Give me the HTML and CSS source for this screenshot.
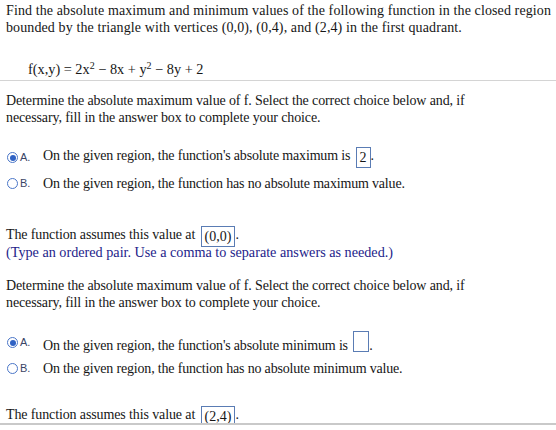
FILE: index.html
```html
<!DOCTYPE html>
<html>
<head>
<meta charset="utf-8">
<link rel="stylesheet" href="styles.css">
</head>
<body>
<div class="frame">
  <p class="intro">Find the absolute maximum and minimum values of the following function in the closed region bounded by the triangle with vertices (0,0), (0,4), and (2,4) in the first quadrant.</p>
  <p class="formula">f(x,y) = 2x<sup>2</sup> − 8x + y<sup>2</sup> − 8y + 2</p>
  <div class="rule"></div>

  <p class="ask">Determine the absolute maximum value of f. Select the correct choice below and, if necessary, fill in the answer box to complete your choice.</p>
  <div class="choice first">
    <span class="radio on"></span><span class="letter">A.</span>
    <span class="ctext">On the given region, the function's absolute maximum is <span class="box">2</span>.</span>
  </div>
  <div class="choice second">
    <span class="radio"></span><span class="letter">B.</span>
    <span class="ctext">On the given region, the function has no absolute maximum value.</span>
  </div>
  <div class="line at">The function assumes this value at <span class="box wide">(0,0)</span>.</div>
  <div class="line hint">(Type an ordered pair. Use a comma to separate answers as needed.)</div>

  <p class="ask second-ask">Determine the absolute maximum value of f. Select the correct choice below and, if necessary, fill in the answer box to complete your choice.</p>
  <div class="choice first2">
    <span class="radio on"></span><span class="letter">A.</span>
    <span class="ctext">On the given region, the function's absolute minimum is <span class="box empty"></span>.</span>
  </div>
  <div class="choice second2">
    <span class="radio"></span><span class="letter">B.</span>
    <span class="ctext">On the given region, the function has no absolute minimum value.</span>
  </div>
  <div class="line at2">The function assumes this value at <span class="box wide">(2,4)</span>.</div>
</div>
</body>
</html>
```
FILE: styles.css
```css
html, body {
  margin: 0;
  padding: 0;
  background: #fff;
}
body {
  font-family: "Liberation Serif", "Times New Roman", serif;
  font-size: 14px;
  line-height: 17px;
  color: #161616;
}
.frame {
  height: 425px;
  overflow: hidden;
  border-bottom: 2px solid #c9c9c9;
  padding: 2px 6px 0 6px;
  box-sizing: border-box;
}
p {
  margin: 0;
}
.intro {
  letter-spacing: 0.11px;
  margin-right: -12px;
}
.formula {
  margin-top: 25px;
  padding-left: 22px;
  font-size: 14.3px;
}
.formula sup {
  font-size: 10px;
  line-height: 0;
  vertical-align: 5px;
}
.rule {
  margin: 2px -6px 0 -6px;
  height: 1px;
  background: #d4d4d4;
}
.ask {
  margin-top: 11px;
  max-width: 470px;
  letter-spacing: -0.12px;
}
.choice {
  display: flex;
  align-items: center;
  height: 17px;
}
.choice.first { margin-top: 23px; }
.choice.second { margin-top: 9px; }
.choice.first2 { margin-top: 23px; }
.choice.second2 { margin-top: 9px; }
.radio {
  width: 9px;
  height: 9px;
  border: 1px solid #4a76c8;
  border-radius: 50%;
  margin-left: 1px;
  position: relative;
  flex: none;
}
.radio.on::after {
  content: "";
  position: absolute;
  left: 1.5px;
  top: 1.5px;
  width: 6px;
  height: 6px;
  border-radius: 50%;
  background: #2f62c4;
}
.letter {
  font-family: "Liberation Sans", Arial, sans-serif;
  font-size: 11px;
  color: #3a4566;
  margin-left: 2px;
  width: 23px;
  flex: none;
}
.ctext {
  white-space: nowrap;
  letter-spacing: -0.18px;
}
.line {
  height: 17px;
  white-space: nowrap;
}
.at, .at2 { letter-spacing: -0.12px; }
.at { margin-top: 34px; }
.hint {
  margin-top: 1px;
  color: #23238a;
  font-size: 14.2px;
}
.second-ask { margin-top: 16px; }
.at2 { margin-top: 29px; }
.box {
  display: inline-block;
  border: 1px solid #5a7cb4;
  line-height: 17px;
  padding: 1px 3px 1px 3px;
  margin-left: 2px;
  vertical-align: -2px;
  height: 17px;
  letter-spacing: 0;
}
.box.empty {
  width: 8px;
}
```
